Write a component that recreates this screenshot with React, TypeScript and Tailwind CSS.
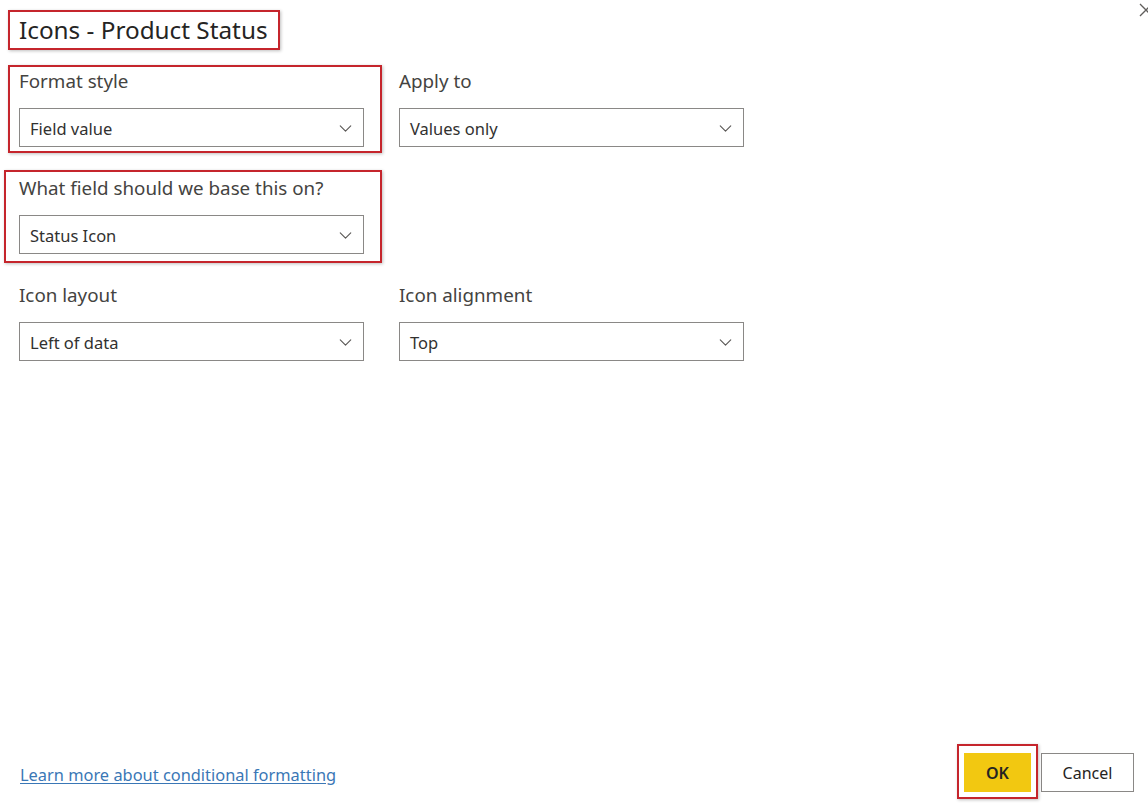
import { ChevronDown } from 'lucide-react';

const font = { fontFamily: "'Noto Sans', 'Open Sans', sans-serif" };

function Highlight({ className }: { className: string }) {
  // red annotation frame drawn over the dialog
  return (
    <div
      className={`pointer-events-none absolute border-2 border-[#c5252c] shadow-[1px_1px_3px_rgba(0,0,0,0.25)] ${className}`}
    />
  );
}

function Field({ label, value }: { label: string; value: string }) {
  return (
    <div className="w-[345px]">
      <div className="h-[24px] text-[18.8px] leading-[24px] text-[#444341]">{label}</div>
      <div className="mt-[15px] flex h-[39px] items-center justify-between border border-[#8a8886] bg-white pl-[10px] pr-[7px]">
        <span className="pt-[3px] text-[16.5px] text-[#323130]">{value}</span>
        <ChevronDown className="mt-[2px] h-[21px] w-[21px] text-[#5a5856]" strokeWidth={1.3} />
      </div>
    </div>
  );
}

export default function App() {
  return (
    <div className="relative h-[812px] w-[1148px] overflow-hidden bg-white" style={font}>
      {/* close button, mostly cut off at the right edge */}
      <svg className="absolute left-[1139px] top-[3px]" width="14" height="14" viewBox="0 0 14 14">
        <path d="M1 1L13 13M13 1L1 13" stroke="#605e5c" strokeWidth="1.3" fill="none" />
      </svg>

      <div className="flex h-full flex-col px-[19px]">
        <h1 className="mt-[14px] h-[32px] text-[24.3px] leading-[32px] text-[#252423]">Icons - Product Status</h1>

        <div className="mt-[23px] flex flex-col gap-[29px]">
          <div className="flex gap-[35px]">
            <Field label="Format style" value="Field value" />
            <Field label="Apply to" value="Values only" />
          </div>
          <div className="flex gap-[35px]">
            <Field label="What field should we base this on?" value="Status Icon" />
          </div>
          <div className="flex gap-[35px]">
            <Field label="Icon layout" value="Left of data" />
            <Field label="Icon alignment" value="Top" />
          </div>
        </div>

        <div className="mt-auto mb-[20px] flex items-center justify-between">
          <a href="#" className="pl-[1px] pt-[6px] text-[16.4px] text-[#3a77b6] underline underline-offset-2">
            Learn more about conditional formatting
          </a>
          <div className="mr-[-5px] flex gap-[10px]">
            <button className="h-[39px] w-[67px] bg-[#f2c811] text-[16px] font-semibold text-[#252423]">OK</button>
            <button className="h-[39px] w-[93px] border border-[#8a8886] bg-white text-[16px] text-[#252423]">
              Cancel
            </button>
          </div>
        </div>
      </div>

      <Highlight className="left-[8px] top-[10px] h-[40px] w-[272px]" />
      <Highlight className="left-[8px] top-[65px] h-[88px] w-[374px]" />
      <Highlight className="left-[4px] top-[170px] h-[93px] w-[378px]" />
      <Highlight className="left-[957px] top-[744px] h-[55px] w-[81px]" />
    </div>
  );
}
